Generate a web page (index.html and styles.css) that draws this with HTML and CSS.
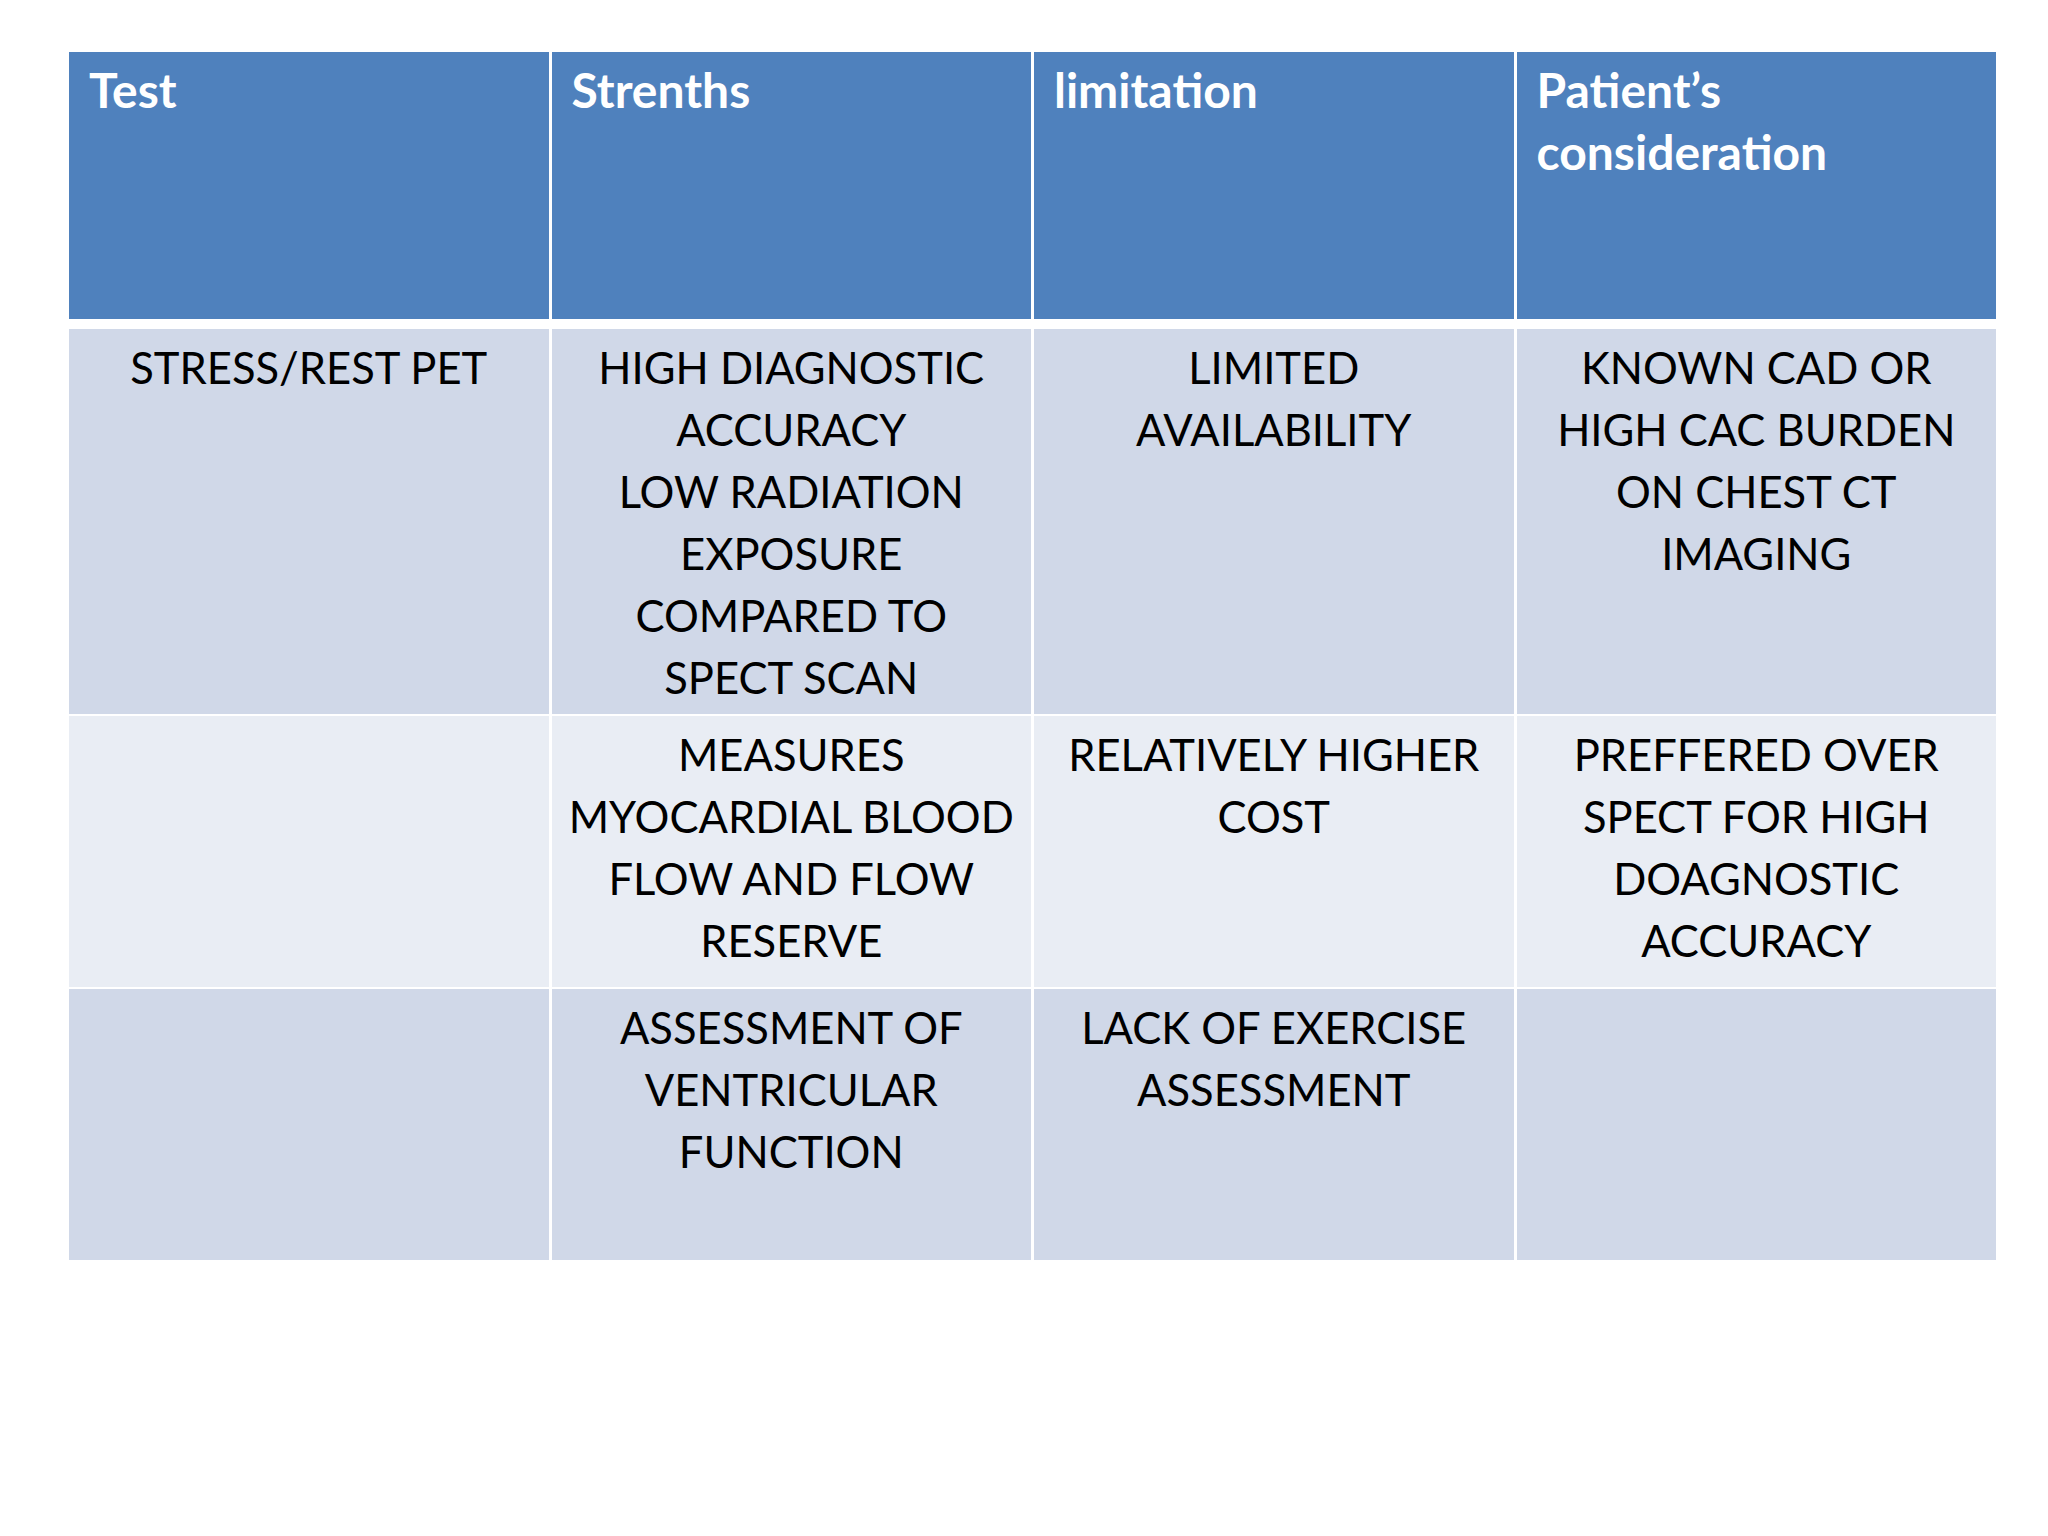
FILE: index.html
```html
<!DOCTYPE html>
<html lang="en">
<head>
<meta charset="utf-8">
<title>PET comparison</title>
<link rel="stylesheet" href="styles.css">
</head>
<body>
<main class="slide">
  <div class="table">
    <div class="cell head">Test</div>
    <div class="cell head">Strenths</div>
    <div class="cell head">limitation</div>
    <div class="cell head">Patient’s<br>consideration</div>

    <div class="cell band1">STRESS/REST PET</div>
    <div class="cell band1">HIGH DIAGNOSTIC<br>ACCURACY<br>LOW RADIATION<br>EXPOSURE<br>COMPARED TO<br>SPECT SCAN</div>
    <div class="cell band1">LIMITED<br>AVAILABILITY</div>
    <div class="cell band1">KNOWN CAD OR<br>HIGH CAC BURDEN<br>ON CHEST CT<br>IMAGING</div>

    <div class="cell band2"></div>
    <div class="cell band2">MEASURES<br>MYOCARDIAL BLOOD<br>FLOW AND FLOW<br>RESERVE</div>
    <div class="cell band2">RELATIVELY HIGHER<br>COST</div>
    <div class="cell band2">PREFFERED OVER<br>SPECT FOR HIGH<br>DOAGNOSTIC<br>ACCURACY</div>

    <div class="cell band1"></div>
    <div class="cell band1">ASSESSMENT OF<br>VENTRICULAR<br>FUNCTION</div>
    <div class="cell band1">LACK OF EXERCISE<br>ASSESSMENT</div>
    <div class="cell band1"></div>
  </div>
</main>
</body>
</html>
```
FILE: styles.css
```css
html, body {
  margin: 0;
  padding: 0;
  background: #ffffff;
}

.slide {
  width: 2048px;
  height: 1536px;
  padding: 52px 0 0 69px;
  box-sizing: border-box;
  font-family: "Lato", "Open Sans", "Liberation Sans", sans-serif;
}

.table {
  width: 1927px;
  display: grid;
  grid-template-columns: repeat(4, minmax(0, 1fr));
  grid-template-rows: 275px 385px 271px 271px;
  column-gap: 3px;
  row-gap: 2px;
  background: #ffffff;
}

.cell {
  box-sizing: border-box;
  line-height: 62px;
  white-space: nowrap;
}

.head {
  background: #4f81bd;
  color: #ffffff;
  font-size: 48px;
  font-weight: 700;
  padding: 7px 20px 0 20px;
  margin-bottom: 8px;
}

.band1,
.band2 {
  color: #000000;
  font-size: 43.5px;
  text-align: center;
  padding: 7px 6px 0 6px;
}

.band1 {
  background: #d0d8e8;
}

.band2 {
  background: #e9edf4;
}
```
